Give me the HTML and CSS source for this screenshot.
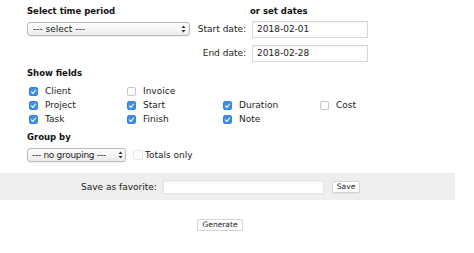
FILE: index.html
```html
<!DOCTYPE html>
<html>
<head>
<meta charset="utf-8">
<link rel="stylesheet" href="styles.css">
</head>
<body>
<div class="page">
  <div class="period">
    <div class="h">Select time period</div>
    <div></div>
    <div class="h h-dates">or set dates</div>
    <div class="select sel-period"><span>--- select ---</span><svg width="5" height="8" viewBox="0 0 5 8"><path d="M0.5 3L2.5 0.5L4.5 3Z M0.5 5L2.5 7.5L4.5 5Z" fill="#333"/></svg></div>
    <div class="lbl">Start date:</div>
    <div class="input date">2018-02-01</div>
    <div></div>
    <div class="lbl">End date:</div>
    <div class="input date">2018-02-28</div>
  </div>

  <div class="h h-fields">Show fields</div>
  <div class="fields">
    <div class="cb-item"><span class="cb on"></span>Client</div>
    <div class="cb-item"><span class="cb"></span>Invoice</div>
    <div></div>
    <div></div>
    <div class="cb-item"><span class="cb on"></span>Project</div>
    <div class="cb-item"><span class="cb on"></span>Start</div>
    <div class="cb-item"><span class="cb on"></span>Duration</div>
    <div class="cb-item"><span class="cb"></span>Cost</div>
    <div class="cb-item"><span class="cb on"></span>Task</div>
    <div class="cb-item"><span class="cb on"></span>Finish</div>
    <div class="cb-item"><span class="cb on"></span>Note</div>
    <div></div>
  </div>

  <div class="h h-group">Group by</div>
  <div class="group-row">
    <div class="select sel-group"><span>--- no grouping ---</span><svg width="5" height="8" viewBox="0 0 5 8"><path d="M0.5 3L2.5 0.5L4.5 3Z M0.5 5L2.5 7.5L4.5 5Z" fill="#333"/></svg></div>
    <div class="cb-item totals"><span class="cb faint"></span>Totals only</div>
  </div>
</div>

<div class="fav">
  <span class="fav-lbl">Save as favorite:</span>
  <div class="input fav-input"></div>
  <button class="btn">Save</button>
</div>

<div class="gen">
  <button class="btn">Generate</button>
</div>
</body>
</html>
```
FILE: styles.css
```css
html, body {
  margin: 0;
  padding: 0;
  background: #fff;
}
body {
  font-family: "DejaVu Sans", Verdana, sans-serif;
  font-size: 9px;
  color: #222;
  width: 455px;
}
.page {
  padding: 5px 0 0 27px;
}
.h {
  font-weight: bold;
  font-size: 8.5px;
  color: #111;
  height: 12px;
  line-height: 12px;
}
.period {
  display: grid;
  grid-template-columns: 163px 62px 116px;
  grid-template-rows: 12px 24px 24px;
  align-items: center;
}
.h-dates {
  margin-left: -2px;
}
.lbl {
  text-align: right;
  padding-right: 6px;
  white-space: nowrap;
}
.select {
  box-sizing: border-box;
  height: 14px;
  border: 1px solid #b9b9b9;
  border-radius: 3px;
  background: linear-gradient(#fdfdfd, #ececec);
  display: flex;
  align-items: center;
  justify-content: space-between;
  padding: 0 3px 0 5px;
  font-size: 9px;
  color: #222;
  white-space: nowrap;
  overflow: hidden;
  box-shadow: 0 1px 0 rgba(0,0,0,0.05);
}
.sel-period {
  width: 163px;
}
.input {
  box-sizing: border-box;
  border: 1px solid #d8d8d8;
  background: #fff;
  box-shadow: inset 0 1px 1px rgba(0,0,0,0.06);
}
.date {
  height: 17px;
  line-height: 15px;
  padding-left: 4px;
  width: 116px;
  font-size: 9px;
}
.h-fields {
  margin-top: 2px;
}
.fields {
  display: grid;
  grid-template-columns: 98px 96px 97px 80px;
  grid-auto-rows: 14px;
  margin-top: 5px;
  margin-left: 2px;
}
.cb-item {
  display: flex;
  align-items: center;
  gap: 7px;
  line-height: 14px;
  white-space: nowrap;
}
.cb {
  box-sizing: border-box;
  width: 9px;
  height: 9px;
  border: 1px solid #c8c8c8;
  border-radius: 2px;
  background: #fff;
  display: flex;
  align-items: center;
  justify-content: center;
  flex: none;
}
.cb.on {
  background: #3f91e8;
  border-color: #3486de;
}
.cb.on::after {
  content: "";
  width: 2px;
  height: 4px;
  border: solid #fff;
  border-width: 0 1.3px 1.3px 0;
  transform: translate(0, -0.5px) rotate(40deg);
}
.cb.faint {
  border-color: #e6e6e6;
}
.h-group {
  margin-top: 5px;
}
.group-row {
  display: flex;
  align-items: center;
  gap: 7px;
  margin-top: 5px;
  height: 14px;
}
.sel-group {
  width: 99px;
  padding: 0 2px 0 4px;
  letter-spacing: -0.3px;
}
.totals {
  gap: 2px;
}
.totals .cb {
  width: 10px;
  height: 10px;
}
.fav {
  margin-top: 11px;
  height: 27px;
  background: #eeeeee;
  display: flex;
  align-items: center;
  padding-left: 81px;
}
.fav-lbl {
  font-size: 9px;
  color: #222;
  margin-right: 6px;
}
.fav-input {
  width: 161px;
  height: 14px;
  border-color: #e4e4e4;
  margin-right: 8px;
}
.btn {
  font-family: "DejaVu Sans", Verdana, sans-serif;
  font-size: 7.5px;
  color: #222;
  background: #fff;
  border: 1px solid #d4d4d4;
  border-radius: 2px;
  padding: 0 4px;
  height: 12px;
  line-height: 10px;
  box-shadow: 0 1px 0 rgba(0,0,0,0.05);
}
.gen {
  display: flex;
  justify-content: center;
  width: 440px;
  margin-top: 19px;
}
```
